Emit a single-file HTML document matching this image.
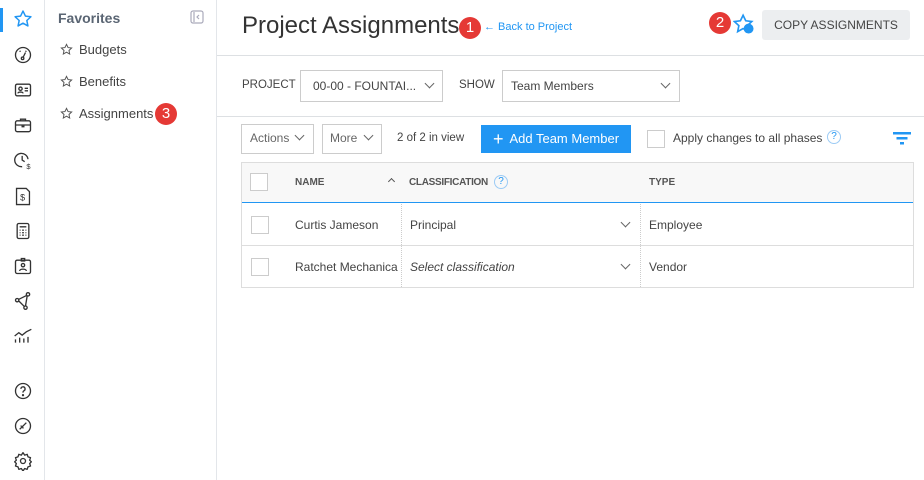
<!DOCTYPE html>
<html><head><meta charset="utf-8"><style>
*{box-sizing:border-box;margin:0;padding:0}
body{width:924px;height:480px;overflow:hidden;font-family:"Liberation Sans",sans-serif;background:#fff;position:relative;color:#333}
.abs{position:absolute}
.rail{left:0;top:0;width:45px;height:480px;border-right:1px solid #e3e6ea;background:#fff}
.rail svg{position:absolute;left:13px}
.fav{left:45px;top:0;width:172px;height:480px;border-right:1px solid #e3e6ea}
.fi{position:absolute;left:15px;font-size:13px;color:#444}
.fi svg{vertical-align:-2px;margin-right:6px}
.badge{position:absolute;width:22px;height:22px;border-radius:50%;background:#e53935;color:#fff;font-size:15px;text-align:center;line-height:22px}
.box{position:absolute;border:1px solid #ccc;background:#fff}
.chk{position:absolute;width:18px;height:18px;border:1px solid #ccc;background:#fff}
.chev{position:absolute;width:7px;height:7px;border-right:1.5px solid #666;border-bottom:1.5px solid #666;transform:rotate(45deg)}
.t{position:absolute;font-size:12px;color:#444;white-space:nowrap}
</style></head><body>
<div class="abs rail">
<div class="abs" style="left:0;top:8px;width:3px;height:24px;background:#2196f3"></div>
<svg style="top:9px" width="20" height="20" viewBox="0 0 24 24" fill="none" stroke="#2196f3" stroke-width="1.8"><path d="M12 2.5l2.9 6 6.6.8-4.9 4.5 1.3 6.5L12 17l-5.9 3.3 1.3-6.5-4.9-4.5 6.6-.8z" stroke-linejoin="round"/></svg>
<svg style="top:45px" width="20" height="20" viewBox="0 0 24 24" fill="none" stroke="#333" stroke-width="1.6"><circle cx="12" cy="12" r="9"/><path d="M12 15l3-6M8 7l1 1M16 7l-1 1"/><circle cx="11.5" cy="16" r="1.5"/></svg>
<svg style="top:80px" width="20" height="20" viewBox="0 0 24 24" fill="none" stroke="#333" stroke-width="1.6"><rect x="3" y="5" width="18" height="14" rx="2"/><circle cx="9" cy="10.5" r="2"/><path d="M6 16c0-2 6-2 6 0M14 10h4M14 13h4"/></svg>
<svg style="top:115px" width="20" height="20" viewBox="0 0 24 24" fill="none" stroke="#333" stroke-width="1.6"><rect x="3" y="7" width="18" height="13" rx="2"/><path d="M9 7V5h6v2M3 12h18M11 12v2h2v-2"/></svg>
<svg style="top:150px" width="20" height="20" viewBox="0 0 24 24" fill="none" stroke="#333" stroke-width="1.6"><path d="M18 11a8 8 0 1 0-7 9"/><path d="M11 7v5l3 2"/><text x="16" y="23" font-size="9" fill="#333" stroke="none">$</text></svg>
<svg style="top:186px" width="20" height="21" viewBox="0 0 24 26" fill="none" stroke="#333" stroke-width="1.6"><path d="M4 3h12l4 4v16H4z"/><text x="8.5" y="18" font-size="11" fill="#333" stroke="none">$</text></svg>
<svg style="top:221px" width="20" height="20" viewBox="0 0 24 24" fill="none" stroke="#333" stroke-width="1.6"><rect x="5" y="3" width="14" height="18" rx="2"/><path d="M8 7h8M8 11h1M11 11h2M15 11h1M8 14h1M11 14h2M15 14h1M8 17h1M11 17h2M15 17h1"/></svg>
<svg style="top:256px" width="20" height="20" viewBox="0 0 24 24" fill="none" stroke="#333" stroke-width="1.6"><rect x="3" y="5" width="18" height="16" rx="2"/><path d="M10 3h4v3h-4z"/><circle cx="12" cy="11" r="2"/><path d="M8 18c0-3 8-3 8 0"/></svg>
<svg style="top:291px" width="20" height="20" viewBox="0 0 24 24" fill="none" stroke="#333" stroke-width="1.6"><circle cx="5" cy="11" r="2"/><circle cx="18" cy="4" r="2"/><circle cx="15" cy="20" r="2"/><path d="M7 10l10-5M7 12l7 7M17 6l-2 12"/></svg>
<svg style="top:326px" width="20" height="20" viewBox="0 0 24 24" fill="none" stroke="#333" stroke-width="1.6"><path d="M2 12l5-4 4 3 5-4 6-3M3 20v-4M8 20v-6M13 20v-5M18 20v-7"/></svg>
<svg style="top:381px" width="20" height="20" viewBox="0 0 24 24" fill="none" stroke="#333" stroke-width="1.6"><circle cx="12" cy="12" r="9"/><path d="M9.5 9.5a2.5 2.5 0 1 1 3.5 2.3c-.7.4-1 1-1 1.7v.5"/><circle cx="12" cy="17" r=".6" fill="#333"/></svg>
<svg style="top:416px" width="20" height="20" viewBox="0 0 24 24" fill="none" stroke="#333" stroke-width="1.6"><circle cx="12" cy="12" r="9"/><path d="M8 16l8-8M9 12a3 3 0 0 1 3 3"/></svg>
<svg style="top:451px" width="20" height="20" viewBox="0 0 24 24" fill="none" stroke="#333" stroke-width="1.6"><circle cx="12" cy="12" r="3"/><path d="M12 2l2 3 3-1 1 3 3 1-1 3 2 2-2 2 1 3-3 1-1 3-3-1-2 3-2-3-3 1-1-3-3-1 1-3-2-2 2-2-1-3 3-1 1-3 3 1z" stroke-linejoin="round"/></svg>
</div>
<div class="abs fav">
<div class="abs" style="left:13px;top:10px;font-size:14px;font-weight:bold;color:#5a6573">Favorites</div>
<svg class="abs" style="left:145px;top:10px" width="14" height="14" viewBox="0 0 14 14" fill="none" stroke="#aab" stroke-width="1.2"><rect x="1" y="1" width="12" height="12" rx="2"/><path d="M4 2v10M9 5l-2 2 2 2"/></svg>
<div class="fi" style="top:42px"><svg width="13" height="13" viewBox="0 0 24 24" fill="none" stroke="#555" stroke-width="1.8"><path d="M12 2.5l2.9 6 6.6.8-4.9 4.5 1.3 6.5L12 17l-5.9 3.3 1.3-6.5-4.9-4.5 6.6-.8z"/></svg>Budgets</div>
<div class="fi" style="top:74px"><svg width="13" height="13" viewBox="0 0 24 24" fill="none" stroke="#555" stroke-width="1.8"><path d="M12 2.5l2.9 6 6.6.8-4.9 4.5 1.3 6.5L12 17l-5.9 3.3 1.3-6.5-4.9-4.5 6.6-.8z"/></svg>Benefits</div>
<div class="fi" style="top:106px"><svg width="13" height="13" viewBox="0 0 24 24" fill="none" stroke="#555" stroke-width="1.8"><path d="M12 2.5l2.9 6 6.6.8-4.9 4.5 1.3 6.5L12 17l-5.9 3.3 1.3-6.5-4.9-4.5 6.6-.8z"/></svg>Assignments</div>
<div class="badge" style="left:110px;top:103px">3</div>
</div>

<div class="abs" style="left:242px;top:12px;font-size:24px;color:#333">Project Assignments</div>
<div class="badge" style="left:459px;top:17px">1</div>
<div class="t" style="left:484px;top:21px;font-size:11px;color:#2196f3">← Back to Project</div>
<div class="badge" style="left:709px;top:12px">2</div>
<svg class="abs" style="left:733px;top:13px" width="22" height="22" viewBox="0 0 24 24" fill="none" stroke="#2196f3" stroke-width="1.8"><path d="M11 2.5l2.9 6 6.6.8-4.9 4.5 1.3 6.5L11 17l-5.9 3.3 1.3-6.5-4.9-4.5 6.6-.8z"/><circle cx="17" cy="17" r="4.5" fill="#2196f3"/></svg>
<div class="abs" style="left:762px;top:10px;width:148px;height:30px;background:#eceef0;border-radius:3px;font-size:12px;color:#444;text-align:center;line-height:30px">COPY ASSIGNMENTS</div>
<div class="abs" style="left:217px;top:55px;width:707px;height:1px;background:#dde0e3"></div>

<div class="t" style="left:242px;top:79px;font-size:11.5px">PROJECT</div>
<div class="box" style="left:300px;top:70px;width:143px;height:32px"></div>
<div class="t" style="left:313px;top:79px">00-00 - FOUNTAI...</div>
<div class="chev" style="left:426px;top:80px"></div>
<div class="t" style="left:459px;top:79px;font-size:11.5px">SHOW</div>
<div class="box" style="left:502px;top:70px;width:178px;height:32px"></div>
<div class="t" style="left:511px;top:79px">Team Members</div>
<div class="chev" style="left:662px;top:80px"></div>
<div class="abs" style="left:217px;top:116px;width:707px;height:1px;background:#dde0e3"></div>

<div class="box" style="left:241px;top:124px;width:73px;height:30px"></div>
<div class="t" style="left:250px;top:131px;color:#666">Actions</div>
<div class="chev" style="left:296px;top:132px"></div>
<div class="box" style="left:322px;top:124px;width:60px;height:30px"></div>
<div class="t" style="left:330px;top:131px;color:#666">More</div>
<div class="chev" style="left:365px;top:132px"></div>
<div class="t" style="left:397px;top:132px;font-size:11.5px">2 of 2 in view</div>
<div class="abs" style="left:481px;top:125px;width:150px;height:28px;background:#2196f3;color:#fff;font-size:13px;line-height:28px;text-align:center"><span style="font-size:18px;vertical-align:-2px;margin-right:6px">+</span>Add Team Member</div>
<div class="chk" style="left:647px;top:130px;width:18px;height:18px"></div>
<div class="t" style="left:673px;top:131px">Apply changes to all phases</div>
<div class="abs" style="left:827px;top:130px;width:14px;height:14px;border:1px solid #9ccbf5;border-radius:50%;color:#2196f3;font-size:10px;text-align:center;line-height:12px">?</div>
<svg class="abs" style="left:893px;top:132px" width="18" height="14" viewBox="0 0 18 14" fill="#2196f3"><rect x="0" y="0" width="18" height="2.5"/><rect x="3.5" y="5" width="11" height="2.5"/><rect x="7" y="10" width="4" height="2.5"/></svg>

<div class="abs" style="left:241px;top:162px;width:673px;height:126px;border:1px solid #ddd"></div>
<div class="abs" style="left:242px;top:163px;width:671px;height:40px;background:#f8f8f8;border-bottom:1px solid #2196f3"></div>
<div class="chk" style="left:250px;top:173px"></div>
<div class="t" style="left:295px;top:177px;font-size:10px;font-weight:bold;color:#555">NAME</div>
<div class="abs" style="left:389px;top:179px;width:5px;height:5px;border-left:1.5px solid #555;border-top:1.5px solid #555;transform:rotate(45deg)"></div>
<div class="t" style="left:409px;top:177px;font-size:10px;font-weight:bold;color:#555;letter-spacing:-0.3px">CLASSIFICATION</div>
<div class="abs" style="left:494px;top:175px;width:14px;height:14px;border:1px solid #9ccbf5;border-radius:50%;color:#2196f3;font-size:10px;text-align:center;line-height:12px">?</div>
<div class="t" style="left:649px;top:177px;font-size:10px;font-weight:bold;color:#555">TYPE</div>

<div class="abs" style="left:242px;top:245px;width:671px;height:1px;background:#ddd"></div>
<div class="abs" style="left:401px;top:204px;width:1px;height:83px;border-left:1px dotted #ccc"></div>
<div class="abs" style="left:640px;top:204px;width:1px;height:83px;border-left:1px dotted #ccc"></div>
<div class="chk" style="left:251px;top:216px"></div>
<div class="t" style="left:295px;top:218px">Curtis Jameson</div>
<div class="t" style="left:410px;top:218px">Principal</div>
<div class="chev" style="left:622px;top:219px"></div>
<div class="t" style="left:649px;top:218px">Employee</div>
<div class="chk" style="left:251px;top:258px"></div>
<div class="t" style="left:295px;top:260px;width:103px;overflow:hidden">Ratchet Mechanical</div>
<div class="t" style="left:410px;top:260px;font-style:italic">Select classification</div>
<div class="chev" style="left:622px;top:261px"></div>
<div class="t" style="left:649px;top:260px">Vendor</div>
</body></html>
